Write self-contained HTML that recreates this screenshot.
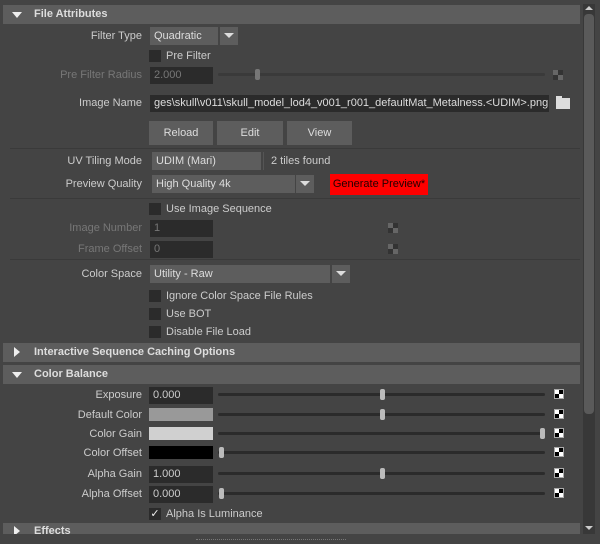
<!DOCTYPE html><html><head><style>
body{margin:0;width:600px;height:544px;background:#444;font-family:"Liberation Sans",sans-serif;font-size:11px;color:#ccc;position:relative;overflow:hidden}
.a{position:absolute}
.hd{position:absolute;left:3px;width:577px;height:19px;background:#5d5d5d;color:#ddd;font-weight:bold}
.hd span{position:absolute;left:31px;top:3px}
.tri{position:absolute;left:9px;top:7px;width:0;height:0;border-left:5px solid transparent;border-right:5px solid transparent;border-top:6px solid #eee}
.trir{position:absolute;left:11px;top:4px;width:0;height:0;border-top:5px solid transparent;border-bottom:5px solid transparent;border-left:6px solid #eee}
.lb{position:absolute;width:142px;left:0;text-align:right}
.dis{color:#777}
.fld{position:absolute;background:#2b2b2b;height:17px;line-height:17px;padding-left:4px;box-sizing:border-box}
.dd{position:absolute;background:#5d5d5d;height:18px;line-height:18px;padding-left:4px;box-sizing:border-box;color:#ddd}
.ar{position:absolute;background:#5d5d5d;width:18px;height:18px}
.ar:after{content:"";position:absolute;left:4px;top:6px;border-left:5px solid transparent;border-right:5px solid transparent;border-top:5px solid #ddd}
.cb{position:absolute;left:149px;width:12px;height:12px;background:#2b2b2b}
.ct{position:absolute;left:166px}
.tr{position:absolute;left:218px;width:327px;height:3px;background:#2b2b2b;border-radius:2px}
.hn{position:absolute;width:5px;height:11px;background:#bbb;border-radius:2px}
.ck{position:absolute;left:553px;width:10px;height:10px;background:conic-gradient(#000 0 25%,#fff 0 50%,#000 0 75%,#fff 0);border:1px solid #aaa;box-sizing:border-box}
.ckd{position:absolute;width:10px;height:10px;background:conic-gradient(#333 0 25%,#666 0 50%,#333 0 75%,#666 0)}
.bt{position:absolute;top:121px;height:24px;line-height:24px;background:#5d5d5d;text-align:center;color:#ddd}
.sep{position:absolute;left:10px;width:570px;height:1px;background:#3a3a3a}
</style></head><body>
<div class="a" style="left:583px;top:4px;width:12px;height:530px;background:#383838"></div>
<div class="a" style="left:584px;top:14px;width:10px;height:400px;background:#5a5a5a;border-radius:4px"></div>
<div class="a" style="left:585px;top:6px;border-left:4px solid transparent;border-right:4px solid transparent;border-bottom:4px solid #ccc"></div>
<div class="a" style="left:585px;top:526px;border-left:4px solid transparent;border-right:4px solid transparent;border-top:4px solid #ccc"></div>

<div class="hd" style="top:5px"><div class="tri"></div><span>File Attributes</span></div>
<div class="lb" style="top:30px">Filter Type</div>
<div class="dd" style="left:150px;top:27px;width:68px">Quadratic</div><div class="ar" style="left:220px;top:27px"></div>
<div class="cb" style="top:50px"></div><div class="ct" style="top:50px">Pre Filter</div>
<div class="lb dis" style="top:69px">Pre Filter Radius</div>
<div class="fld dis" style="left:150px;top:67px;width:63px">2.000</div>
<div class="tr" style="top:73px;background:#3a3a3a"></div><div class="hn" style="left:255px;top:69px;background:#777"></div>
<div class="ckd" style="left:553px;top:70px"></div>
<div class="lb" style="top:97px">Image Name</div>
<div class="fld" style="left:150px;top:95px;width:399px;overflow:hidden;white-space:nowrap;color:#ddd">ges\skull\v011\skull_model_lod4_v001_r001_defaultMat_Metalness.&lt;UDIM&gt;.png</div>
<div class="a" style="left:556px;top:98px;width:14px;height:11px;background:#ddd"></div><div class="a" style="left:556px;top:96px;width:6px;height:3px;background:#ddd"></div>
<div class="bt" style="left:149px;width:64px">Reload</div>
<div class="bt" style="left:217px;width:66px">Edit</div>
<div class="bt" style="left:287px;width:65px">View</div>
<div class="sep" style="top:148px"></div>
<div class="lb" style="top:155px">UV Tiling Mode</div>
<div class="dd" style="left:152px;top:152px;width:109px">UDIM (Mari)</div>
<div class="a" style="left:263px;top:152px;width:1px;height:18px;background:#555"></div>
<div class="a" style="left:271px;top:155px">2 tiles found</div>
<div class="lb" style="top:178px">Preview Quality</div>
<div class="dd" style="left:152px;top:175px;width:143px">High Quality 4k</div><div class="ar" style="left:296px;top:175px"></div>
<div class="a" style="left:330px;top:174px;width:98px;height:21px;background:#f00;color:#200;line-height:21px;text-align:center">Generate Preview*</div>
<div class="sep" style="top:198px"></div>
<div class="cb" style="top:203px"></div><div class="ct" style="top:203px">Use Image Sequence</div>
<div class="lb dis" style="top:222px">Image Number</div>
<div class="fld dis" style="left:150px;top:220px;width:63px">1</div><div class="ckd" style="left:388px;top:223px"></div>
<div class="lb dis" style="top:243px">Frame Offset</div>
<div class="fld dis" style="left:150px;top:241px;width:63px">0</div><div class="ckd" style="left:388px;top:244px"></div>
<div class="sep" style="top:259px"></div>
<div class="lb" style="top:268px">Color Space</div>
<div class="dd" style="left:150px;top:265px;width:180px">Utility - Raw</div><div class="ar" style="left:332px;top:265px"></div>
<div class="cb" style="top:290px"></div><div class="ct" style="top:290px">Ignore Color Space File Rules</div>
<div class="cb" style="top:308px"></div><div class="ct" style="top:308px">Use BOT</div>
<div class="cb" style="top:326px"></div><div class="ct" style="top:326px">Disable File Load</div>

<div class="hd" style="top:343px"><div class="trir"></div><span>Interactive Sequence Caching Options</span></div>
<div class="hd" style="top:365px"><div class="tri"></div><span>Color Balance</span></div>

<div class="lb" style="top:389px">Exposure</div><div class="fld" style="left:149px;top:387px;width:64px">0.000</div>
<div class="tr" style="top:393px"></div><div class="hn" style="left:380px;top:389px"></div><div class="ck" style="left:554px;top:389px"></div>
<div class="lb" style="top:409px">Default Color</div><div class="a" style="left:149px;top:408px;width:64px;height:13px;background:#999"></div>
<div class="tr" style="top:413px"></div><div class="hn" style="left:380px;top:409px"></div><div class="ck" style="left:554px;top:409px"></div>
<div class="lb" style="top:428px">Color Gain</div><div class="a" style="left:149px;top:427px;width:64px;height:13px;background:#d0d0d0"></div>
<div class="tr" style="top:432px"></div><div class="hn" style="left:540px;top:428px"></div><div class="ck" style="left:554px;top:428px"></div>
<div class="lb" style="top:447px">Color Offset</div><div class="a" style="left:149px;top:446px;width:64px;height:13px;background:#000"></div>
<div class="tr" style="top:451px"></div><div class="hn" style="left:219px;top:447px"></div><div class="ck" style="left:554px;top:447px"></div>
<div class="lb" style="top:468px">Alpha Gain</div><div class="fld" style="left:149px;top:466px;width:64px">1.000</div>
<div class="tr" style="top:472px"></div><div class="hn" style="left:380px;top:468px"></div><div class="ck" style="left:554px;top:468px"></div>
<div class="lb" style="top:488px">Alpha Offset</div><div class="fld" style="left:149px;top:486px;width:64px">0.000</div>
<div class="tr" style="top:492px"></div><div class="hn" style="left:219px;top:488px"></div><div class="ck" style="left:554px;top:488px"></div>
<div class="cb" style="top:508px;color:#eee;font-size:11px;line-height:12px;text-align:center">✓</div><div class="ct" style="top:508px">Alpha Is Luminance</div>
<div class="hd" style="top:523px;height:11px;overflow:hidden"><div class="trir" style="top:3px"></div><span style="top:2px">Effects</span></div>
<div class="a" style="left:0;top:534px;width:600px;height:10px;background:#444"></div>
<div class="a" style="left:196px;top:539px;width:150px;height:1px;border-top:1px dotted #777"></div>
</body></html>
